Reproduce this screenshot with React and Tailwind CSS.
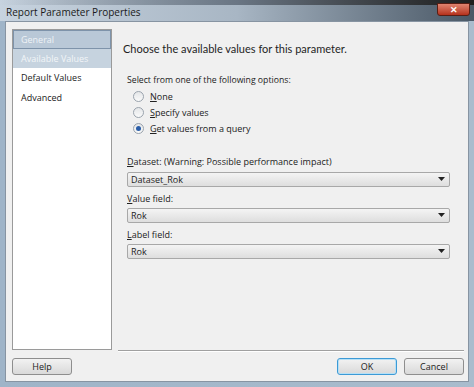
import React from 'react';

const Radio = ({ checked }) => (
  <span className="w-[11px] h-[11px] rounded-full border border-[#9aa3ad] bg-gradient-to-b from-[#e4e6e8] to-[#fafafa] flex items-center justify-center">
    {checked && <span className="w-[5px] h-[5px] rounded-full bg-[#2a5da8]" />}
  </span>
);

const Select = ({ value }) => (
  <div className="h-[15px] border border-[#a8a8a8] rounded-[2px] bg-gradient-to-b from-[#f4f4f4] to-[#dedede] flex items-center justify-between pl-[3px] pr-[4px]">
    <span className="text-[9px] text-[#222] leading-none">{value}</span>
    <svg width="7" height="4" viewBox="0 0 7 4"><path d="M0 0h7L3.5 4z" fill="#222" /></svg>
  </div>
);

const Button = ({ children, focused }) => (
  <button className={`w-[60px] h-[17px] rounded-[3px] border text-[9px] text-[#222] leading-none bg-gradient-to-b from-[#f2f2f2] to-[#d9d9d9] ${focused ? 'border-[#3c9ad6] shadow-[inset_0_0_0_1px_#b6e0f6]' : 'border-[#8e8e8e]'}`}>
    {children}
  </button>
);

export default function App() {
  return (
    <div className="w-[474px] h-[387px] bg-[#2b3d50] flex flex-col font-['Open_Sans',sans-serif] overflow-hidden">
      {/* Title bar */}
      <div className="h-[21px] relative bg-gradient-to-r from-[#c7d3df] via-[#a8b6c4] to-[#4a5866] flex items-center pl-[6px] pt-[4px]">
        <div className="absolute inset-x-0 top-0 h-[5px] bg-gradient-to-r from-transparent via-[#6a7684] to-[#1e1e1e]" />
        <span className="relative text-[10px] text-[#1a1a1a]">Report Parameter Properties</span>
        <div className="absolute right-[4px] top-[3px] w-[33px] h-[13px] rounded-b-[3px] bg-gradient-to-b from-[#e0836f] to-[#b5301b] border border-[#5a1e14] flex items-center justify-center">
          <span className="text-white text-[9px] font-bold leading-none">✕</span>
        </div>
      </div>
      {/* Window body */}
      <div className="flex-1 flex px-[5px] pb-[5px] bg-gradient-to-r from-[#9fb4c8] to-[#a9bccd]">
        <div className="flex-1 bg-[#f0f0f0] border border-[#8794a2] flex flex-col">
          <div className="flex-1 flex pt-[7px] pl-[6px] pr-[4px]">
            {/* Left nav */}
            <div className="w-[100px] border border-[#9a9a9a] bg-white flex flex-col text-[9px]">
              <div className="h-[19px] border border-[#7e93aa] bg-[#b9c8d7] text-[#eef2f6] flex items-center pl-[7px]">General</div>
              <div className="h-[19px] bg-[#c6d3df] text-[#f2f5f8] flex items-center pl-[8px]">Available Values</div>
              <div className="h-[20px] text-[#222] flex items-center pl-[8px]">Default Values</div>
              <div className="h-[20px] text-[#222] flex items-center pl-[8px]">Advanced</div>
            </div>
            {/* Right content */}
            <div className="flex-1 flex flex-col pl-[11px] pr-[14px]">
              <div className="text-[11px] text-[#1e1e1e] mt-[12px] font-['Lato',sans-serif]">Choose the available values for this parameter.</div>
              <div className="flex flex-col pl-[4px] mt-[16px] text-[9px] text-[#222]">
                <div className="h-[12px] leading-[12px] text-[8.7px]">Select from one of the following options:</div>
                <div className="flex flex-col mt-[3px] pl-[6px]">
                  <div className="h-[16px] flex items-center gap-[6px]"><Radio /><span><u>N</u>one</span></div>
                  <div className="h-[16px] flex items-center gap-[6px]"><Radio /><span><u>S</u>pecify values</span></div>
                  <div className="h-[16px] flex items-center gap-[6px]"><Radio checked /><span><u>G</u>et values from a query</span></div>
                </div>
                <div className="h-[12px] leading-[12px] mt-[19px]"><u>D</u>ataset: (Warning: Possible performance impact)</div>
                <div className="mt-[4px]"><Select value="Dataset_Rok" /></div>
                <div className="h-[12px] leading-[12px] mt-[6px]"><u>V</u>alue field:</div>
                <div className="mt-[3px]"><Select value="Rok" /></div>
                <div className="h-[12px] leading-[12px] mt-[6px]"><u>L</u>abel field:</div>
                <div className="mt-[3px]"><Select value="Rok" /></div>
              </div>
            </div>
          </div>
          {/* Separator */}
          <div className="flex pl-[6px] pr-[4px]">
            <div className="w-[100px]" />
            <div className="flex-1 ml-[6px] h-[2px] border-t border-[#a0a0a0] border-b-white border-b" />
          </div>
          {/* Buttons */}
          <div className="flex items-center pl-[6px] pr-[4px] pt-[6px] pb-[6px]">
            <Button>Help</Button>
            <div className="flex-1" />
            <Button focused>OK</Button>
            <div className="w-[7px]" />
            <Button>Cancel</Button>
          </div>
        </div>
      </div>
    </div>
  );
}
